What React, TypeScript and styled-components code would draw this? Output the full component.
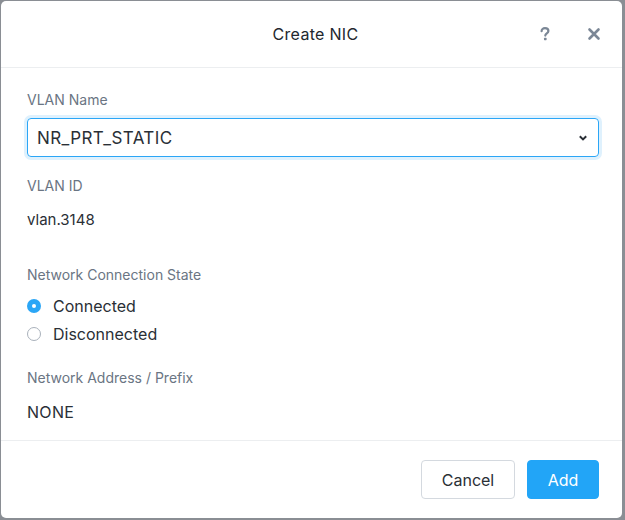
import styled, { createGlobalStyle } from "styled-components";

const GlobalStyle = createGlobalStyle`
  html, body {
    margin: 0;
    padding: 0;
    background: #8a8e94;
  }
  body {
    font-family: "Inter", "Liberation Sans", sans-serif;
  }
  * {
    box-sizing: border-box;
  }
`;

const Page = styled.div`
  width: 625px;
  height: 520px;
  padding: 1px 3px 2px 1px;
`;

const Modal = styled.div`
  height: 100%;
  background: #ffffff;
  border-radius: 5px;
  display: flex;
  flex-direction: column;
  overflow: hidden;
`;

const Header = styled.header`
  height: 67px;
  flex-shrink: 0;
  display: grid;
  grid-template-columns: 1fr auto 1fr;
  align-items: center;
  padding: 0 18px 0 26px;
  border-bottom: 1px solid #eceef0;
`;

const Title = styled.h1`
  grid-column: 2;
  margin: 0;
  font-size: 16px;
  font-weight: 400;
  letter-spacing: 0.3px;
  color: #22272e;
`;

const HeaderActions = styled.div`
  grid-column: 3;
  justify-self: end;
  display: flex;
  align-items: center;
  gap: 29px;
`;

const IconButton = styled.button`
  border: none;
  background: none;
  padding: 0;
  width: 20px;
  height: 20px;
  display: flex;
  align-items: center;
  justify-content: center;
  color: #7b8796;
  cursor: pointer;
`;

const Body = styled.div`
  flex: 1;
  padding: 24px 23px 0 26px;
  display: flex;
  flex-direction: column;
`;

const Field = styled.div<{ $gap?: number }>`
  display: flex;
  flex-direction: column;
  margin-bottom: ${(p) => p.$gap ?? 0}px;
`;

const Label = styled.label`
  font-size: 14px;
  color: #6a7583;
  line-height: 16px;
  margin-bottom: 10px;
`;

const SelectBox = styled.div`
  height: 39px;
  border: 1px solid #2ba6f6;
  border-radius: 4px;
  box-shadow: 0 0 0 3px #dff1fd;
  display: flex;
  align-items: center;
  justify-content: space-between;
  padding: 0 10px 0 9px;
  font-size: 17px;
  letter-spacing: 0.4px;
  color: #2a2f36;
`;

const Value = styled.div<{ $caps?: boolean }>`
  font-size: ${(p) => (p.$caps ? 16 : 15)}px;
  color: #2a2f36;
  line-height: 20px;
  margin-top: 6px;
  letter-spacing: ${(p) => (p.$caps ? "0.3px" : "0")};
`;

const RadioList = styled.div`
  display: flex;
  flex-direction: column;
  gap: 8px;
  margin-top: 3px;
`;

const RadioRow = styled.label`
  display: flex;
  align-items: center;
  gap: 12px;
  font-size: 16px;
  color: #2a2f36;
  line-height: 20px;
`;

const RadioDot = styled.span<{ $checked: boolean }>`
  width: 14px;
  height: 14px;
  border-radius: 50%;
  flex-shrink: 0;
  background: ${(p) => (p.$checked ? "#2ba6f6" : "#ffffff")};
  border: ${(p) => (p.$checked ? "none" : "1px solid #a9b1bb")};
  display: flex;
  align-items: center;
  justify-content: center;
  &::after {
    content: "";
    width: 4px;
    height: 4px;
    border-radius: 50%;
    background: #ffffff;
    display: ${(p) => (p.$checked ? "block" : "none")};
  }
`;

const Footer = styled.footer`
  height: 78px;
  flex-shrink: 0;
  border-top: 1px solid #eceef0;
  display: flex;
  align-items: center;
  justify-content: flex-end;
  gap: 12px;
  padding: 0 23px 0 0;
`;

const Button = styled.button<{ $primary?: boolean }>`
  height: 39px;
  padding: 0 18px;
  min-width: ${(p) => (p.$primary ? 72 : 94)}px;
  border-radius: 4px;
  font-family: inherit;
  font-size: 16px;
  cursor: pointer;
  border: 1px solid ${(p) => (p.$primary ? "#22a5f7" : "#d4d9df")};
  background: ${(p) => (p.$primary ? "#22a5f7" : "#ffffff")};
  color: ${(p) => (p.$primary ? "#ffffff" : "#2a2f36")};
`;

export default function App() {
  return (
    <Page>
      <GlobalStyle />
      <Modal>
        <Header>
          <Title>Create NIC</Title>
          <HeaderActions>
            <IconButton aria-label="Help">
              <svg width="12" height="16" viewBox="0 0 12 16">
                <path
                  d="M2.6 5.2C2.6 3.3 4 2.2 6 2.2S9.4 3.4 9.4 5c0 2.4-3.1 2.4-3.1 4.6"
                  fill="none"
                  stroke="currentColor"
                  strokeWidth="2.2"
                  strokeLinecap="round"
                />
                <rect x="5" y="11.8" width="2.6" height="2.4" rx="0.6" fill="currentColor" />
              </svg>
            </IconButton>
            <IconButton aria-label="Close">
              <svg width="14" height="14" viewBox="0 0 14 14">
                <path
                  d="M2.5 2.5l9 9M11.5 2.5l-9 9"
                  stroke="currentColor"
                  strokeWidth="2.6"
                  strokeLinecap="round"
                />
              </svg>
            </IconButton>
          </HeaderActions>
        </Header>
        <Body>
          <Field $gap={21}>
            <Label>VLAN Name</Label>
            <SelectBox>
              <span>NR_PRT_STATIC</span>
              <svg width="10" height="8" viewBox="0 0 10 8">
                <path
                  d="M1.8 2.2L5 5.4l3.2-3.2"
                  fill="none"
                  stroke="#2a2f36"
                  strokeWidth="2"
                />
              </svg>
            </SelectBox>
          </Field>
          <Field $gap={37}>
            <Label>VLAN ID</Label>
            <Value>vlan.3148</Value>
          </Field>
          <Field $gap={26}>
            <Label>Network Connection State</Label>
            <RadioList>
              <RadioRow>
                <RadioDot $checked />
                Connected
              </RadioRow>
              <RadioRow>
                <RadioDot $checked={false} />
                Disconnected
              </RadioRow>
            </RadioList>
          </Field>
          <Field>
            <Label>Network Address / Prefix</Label>
            <Value $caps>NONE</Value>
          </Field>
        </Body>
        <Footer>
          <Button>Cancel</Button>
          <Button $primary>Add</Button>
        </Footer>
      </Modal>
    </Page>
  );
}
